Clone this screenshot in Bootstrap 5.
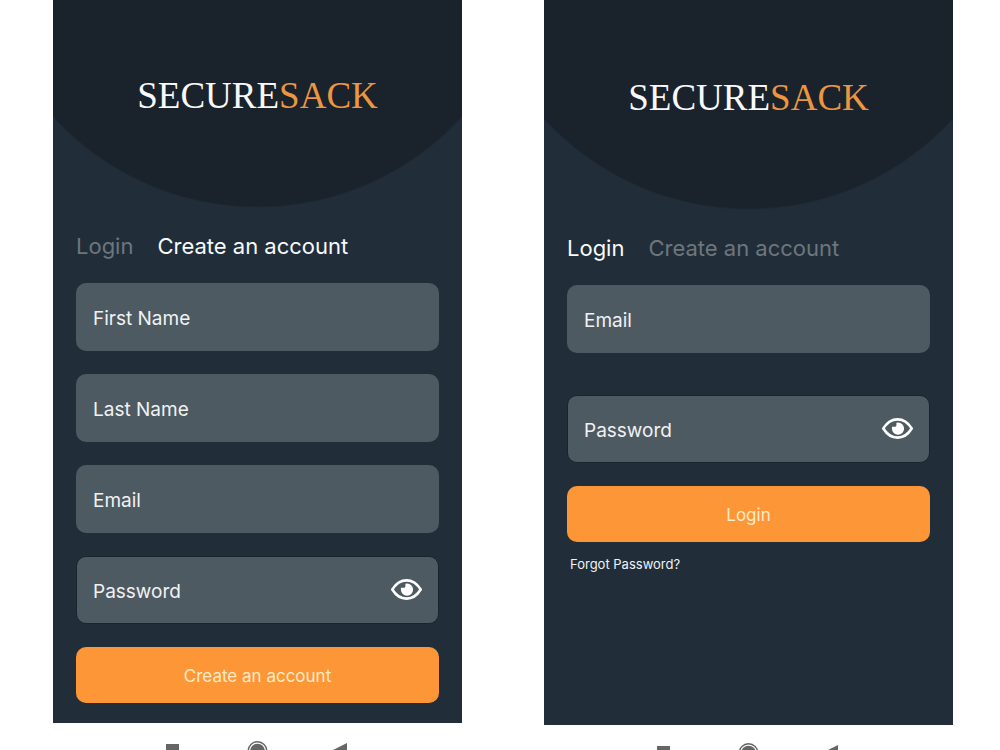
<!DOCTYPE html>
<html lang="en">
<head>
<meta charset="utf-8">
<meta name="viewport" content="width=device-width, initial-scale=1">
<title>SecureSack</title>
<link href="https://cdn.jsdelivr.net/npm/bootstrap@5.3.0/dist/css/bootstrap.min.css" rel="stylesheet">
<style>
  body { background: #fff; font-family: Inter, "Liberation Sans", sans-serif; }
  .screens { display: grid; grid-template-columns: repeat(auto-fit, minmax(340px, 1fr)); column-gap: 82px; padding: 0 47px 0 53px; }
  .panel { padding: 0 23px 20px; color: #f4f6f7;
    background: radial-gradient(circle at 50% -70px, #1a222c 276px, #212e3a 278px); }
  .panel-login { min-height: 725px; padding-top: 2px;
    background: radial-gradient(circle at 50% -68px, #1a222c 276px, #212e3a 278px); }
  .brand { height: 207px; padding-top: 71px; font: 37px/50px "Liberation Serif", serif; text-align: center; color: #f8f9fa; }
  .brand span { color: #ed9640; }
  .tabs { gap: 24px; padding: 24px 0 21px; font-size: 22px; line-height: 31px; }
  .tabs a { color: #6d767d; text-decoration: none; white-space: nowrap; }
  .tabs a.active { color: #f8f9fa; }
  .field { position: relative; margin-bottom: 23px; }
  .field-wide { margin-bottom: 42px; }
  .field .form-control { height: 68px; padding: 2px 17px 0; border: 0; border-radius: 10px; background: #4e5a62; color: #f0f2f3; font-size: 19px; }
  .field .secret { border: 1px solid #1a242f; padding-right: 64px; }
  /* the label rests inside the empty box and goes once something is typed */
  .field label { position: absolute; left: 17px; top: 21px; color: #f0f2f3; font-size: 19px; line-height: 30px; pointer-events: none; }
  .field .form-control:not(:placeholder-shown) + label { visibility: hidden; }
  .reveal { right: 16px; top: 22px; width: 33px; height: 23px; }
  .reveal svg { display: block; }
  .submit { height: 56px; padding-top: 10px; border: 0; border-radius: 10px; font-size: 17px; }
  .submit, .submit:hover { background: #fd9637; color: #fdebc8; }
  .forgot { padding: 12px 3px 0; font-size: 13px; line-height: 21px; }
  .forgot a { color: #f0f2f3; text-decoration: none; }
  .softkeys { padding-top: 18px; color: #666; }
  .softkeys svg { display: block; margin: 0 auto; width: 184px; }
</style>
</head>
<body>
<svg class="d-none" aria-hidden="true">
  <symbol id="eye" viewBox="0 0 33 23">
    <path d="M2.300 11.500C6 5.500 11 2.400 16.500 2.400S27 5.500 30.700 11.500C27 17.500 22 20.600 16.500 20.600S6 17.500 2.300 11.500Z" fill="none" stroke="#fff" stroke-width="2.600" stroke-linejoin="round"/>
    <path d="M17 5.500A6.100 6.100 0 1 1 10.900 11.600V9.800H13.600C14.800 9.800 15.400 9 15.400 8V5.700Z" fill="#fff"/>
  </symbol>
  <symbol id="keys" viewBox="0 0 184 9">
    <path d="M0 3H13V16H0Z" fill="currentColor"/>
    <circle cx="91.500" cy="10" r="9.300" fill="none" stroke="currentColor" stroke-width="1.400"/>
    <circle cx="91.500" cy="10" r="7.300" fill="currentColor"/>
    <path d="M181 2V18L165 10Z" fill="currentColor"/>
  </symbol>
</svg>
<main class="screens">
  <section>
    <div class="panel">
      <div class="brand">SECURE<span>SACK</span></div>
      <nav class="tabs d-flex"><a href="#login">Login</a><a class="active" href="#create" aria-current="page">Create an account</a></nav>
      <form id="create">
        <div class="field"><input class="form-control" id="first" type="text" placeholder=" "><label for="first">First Name</label></div>
        <div class="field"><input class="form-control" id="last" type="text" placeholder=" "><label for="last">Last Name</label></div>
        <div class="field"><input class="form-control" id="mail" type="email" placeholder=" "><label for="mail">Email</label></div>
        <div class="field"><input class="form-control secret" id="pass" type="password" placeholder=" "><label for="pass">Password</label>
          <button class="reveal btn p-0 border-0 position-absolute" type="button" aria-label="Show password"><svg width="33" height="23"><use href="#eye"/></svg></button></div>
        <button class="submit btn w-100" type="submit">Create an account</button>
      </form>
    </div>
    <div class="softkeys"><svg height="9" viewBox="0 0 184 9"><use href="#keys" width="184" height="9"/></svg></div>
  </section>
  <section>
    <div class="panel panel-login">
      <div class="brand">SECURE<span>SACK</span></div>
      <nav class="tabs d-flex"><a class="active" href="#login" aria-current="page">Login</a><a href="#create">Create an account</a></nav>
      <form id="login">
        <div class="field field-wide"><input class="form-control" id="user" type="email" placeholder=" "><label for="user">Email</label></div>
        <div class="field"><input class="form-control secret" id="key" type="password" placeholder=" "><label for="key">Password</label>
          <button class="reveal btn p-0 border-0 position-absolute" type="button" aria-label="Show password"><svg width="33" height="23"><use href="#eye"/></svg></button></div>
        <button class="submit btn w-100" type="submit">Login</button>
        <div class="forgot"><a href="#forgot">Forgot Password?</a></div>
      </form>
    </div>
    <div class="softkeys"><svg height="7" viewBox="0 0 184 7"><use href="#keys" width="184" height="9"/></svg></div>
  </section>
</main>
<script src="https://cdn.jsdelivr.net/npm/bootstrap@5.3.0/dist/js/bootstrap.bundle.min.js"></script>
</body>
</html>
